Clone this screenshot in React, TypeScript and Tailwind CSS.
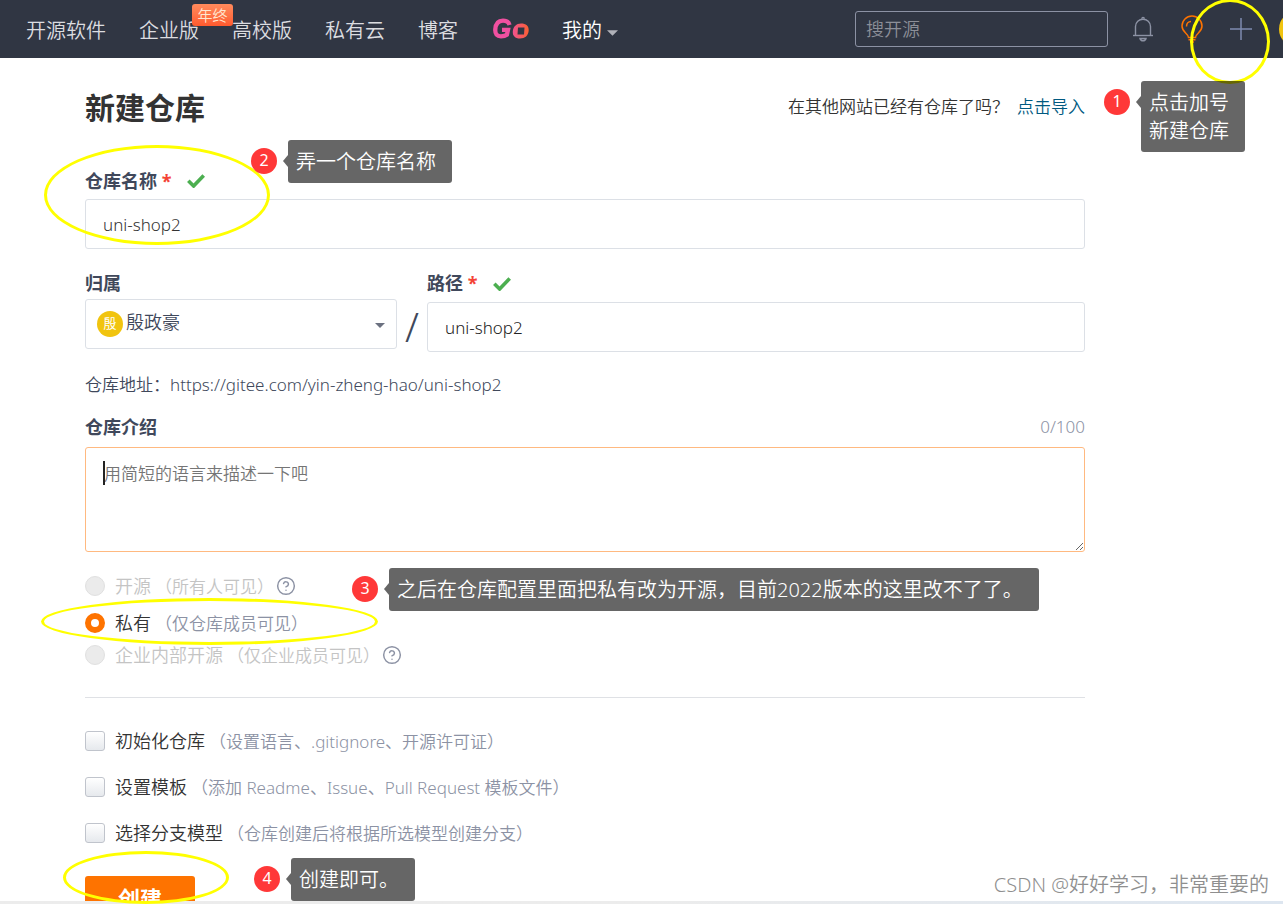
import React from 'react';
import { CircleHelp } from 'lucide-react';

const Caret = ({ className }: { className: string }) => (
  <svg viewBox="0 0 10 5" className={className} fill="currentColor" aria-hidden="true">
    <path d="M0 0h10L5 5z" />
  </svg>
);

const CheckMark = () => (
  <svg viewBox="0 0 18 14" className="ml-4 h-3.5 w-[18px]" fill="none" stroke="#4caf50" strokeWidth="3.6" aria-label="ok">
    <path d="M1.3 6.8L6.6 12L16.7 1.5" />
  </svg>
);

const BellIcon = () => (
  <svg viewBox="0 0 22 26" className="h-[26px] w-[22px]" fill="none" stroke="#8c92a4" strokeWidth="1.4" aria-hidden="true">
    <path d="M3.500 19V10.500C3.500 6 7 3.200 11 3.200S18.500 6 18.500 10.500V19" />
    <path d="M1 19.500h20" />
    <path d="M9.700 2.800a1.300 1.300 0 0 1 2.600 0" />
    <path d="M8 22.500h6c-.4 1.600-1.600 2.300-3 2.300s-2.600-.7-3-2.300z" />
  </svg>
);

const BulbIcon = () => (
  <svg viewBox="0 0 22 28" className="h-7 w-[22px]" fill="none" stroke="#fe7300" strokeWidth="1.5" aria-hidden="true">
    <path d="M7.500 22.500C7.500 18.500 1 17.500 1 11a10 10 0 0 1 20 0C21 17.500 14.500 18.500 14.500 22.500z" />
    <path d="M5.500 11.500C5.500 8.500 7.500 6.500 10 6.500" />
    <path d="M7.500 24.700h7M9 27h4" />
  </svg>
);

const Header = () => {
  return (
    <header className="flex h-[58px] shrink-0 items-center overflow-hidden bg-[#303643] text-[20px] text-[#dcdde0]">
      <nav className="flex shrink-0 items-center gap-[33px] pt-1 pl-[26px] whitespace-nowrap">
        <a href="#">开源软件</a>
        <a href="#" className="relative">
          企业版
          <span className="absolute -top-3 left-[53px] z-10 flex h-[22px] w-[41px] items-center justify-center rounded-[3px] bg-linear-to-b from-[#ff8a5c] to-[#ff5a2e] text-[15px] text-[#ffe6d0]">
            年终
          </span>
        </a>
        <a href="#">高校版</a>
        <a href="#">私有云</a>
        <a href="#">博客</a>
        <a href="#" aria-label="Go" className="pb-1">
          <svg viewBox="0 0 38 22" className="h-[22px] w-[38px]" fill="none" aria-hidden="true">
            <defs>
              <linearGradient id="go" x1="0" y1="0" x2="38" y2="0" gradientUnits="userSpaceOnUse">
                <stop offset="0.5" stopColor="#f050a0" />
                <stop offset="1" stopColor="#fb6030" />
              </linearGradient>
            </defs>
            <path d="M18.500 7C17.800 3.600 15.200 2.700 12 2.700C7 2.700 4.600 6.500 4.300 11.500C4 16 6 18.300 10 18.300C12.500 18.300 14.500 17.800 15.900 16.800L17 11.900H11" stroke="url(#go)" strokeWidth="4.300" />
            <path fillRule="evenodd" fill="url(#go)" d="M30 5.500C35 5.500 38 8 37.700 12.500C37.400 17.500 34 20.500 29 20.500C24 20.500 21.500 17.800 21.800 13.500C22.100 8.500 25.500 5.500 30 5.500zM27 9.500L26.500 16.500H33L33.500 9.500z" />
          </svg>
        </a>
        <a href="#" className="flex items-center gap-[5px] text-white">
          我的
          <Caret className="mt-1 h-1.5 w-[11px] text-[#b0b2b9]" />
        </a>
      </nav>
      <input
        type="search"
        aria-label="搜开源"
        placeholder="搜开源"
        className="ml-auto h-9 w-[253px] shrink-0 rounded-[3px] border border-[#8c92a4] bg-transparent px-2.5 text-[18px] outline-none placeholder:text-[#8c8f98]"
      />
      <div className="ml-6 flex shrink-0 items-center gap-[27px]">
        <button aria-label="通知"><BellIcon /></button>
        <button aria-label="建议"><BulbIcon /></button>
        <button aria-label="新建">
          <svg viewBox="0 0 22 22" className="h-[22px] w-[22px]" stroke="#7d8bb0" strokeWidth="1.5" aria-hidden="true">
            <path d="M11 0v22M0 11h22" />
          </svg>
        </button>
        <span className="-mr-8 h-9 w-9 rounded-full bg-[#f1c40f]" />
      </div>
    </header>
  );
};

type ChoiceProps = { id: string; label: string; hint: string; checked?: boolean; disabled?: boolean; help?: boolean };

const RadioRow = ({ id, label, hint, checked, disabled, help }: ChoiceProps) => (
  <div className={`flex h-8 items-center text-[18px] ${disabled ? 'text-[#c4c4c4]' : 'text-[#333]'}`}>
    <input
      type="radio"
      name="visibility"
      id={id}
      defaultChecked={checked}
      disabled={disabled}
      className="h-5 w-5 shrink-0 appearance-none rounded-full border border-[#e0e0e0] bg-[#ebebeb] checked:border-[6px] checked:border-[#fe7300] checked:bg-white"
    />
    <label htmlFor={id} className="ml-2.5">
      {label}
      <span className={`ml-1 text-[17px] ${disabled ? '' : 'text-[#8c92a4]'}`}>{hint}</span>
    </label>
    {help && <CircleHelp className="ml-0.5 h-5 w-5 text-[#8c92a4]" strokeWidth={1.75} />}
  </div>
);

const CheckRow = ({ id, label, hint }: ChoiceProps) => (
  <div className="flex h-[46px] items-center text-[18px] text-[#333]">
    <input
      type="checkbox"
      id={id}
      className="h-5 w-5 shrink-0 appearance-none rounded-[3px] border border-[#c0c4cc] bg-linear-to-b from-white to-[#e6e9ed]"
    />
    <label htmlFor={id} className="ml-2.5">
      {label}
      <span className="ml-1 text-[17px] text-[#8c92a4]">{hint}</span>
    </label>
  </div>
);

const fieldClass = 'w-full rounded-[3px] border border-[#dce0e6] bg-white outline-none';

const RepoForm = () => {
  return (
    <form className="ml-[85px] max-w-[1000px] text-[18px] text-[#40485b]">
      <div className="mt-6 flex h-[50px] items-center justify-between">
        <h1 className="text-[30px] font-bold text-[#333]">新建仓库</h1>
        <p className="text-[17px] text-[#333]">
          在其他网站已经有仓库了吗？
          <a href="#" className="ml-2 text-[#005980]">点击导入</a>
        </p>
      </div>

      <div className="mt-[33px] flex h-8 items-center">
        <label htmlFor="name" className="font-bold">仓库名称 <span className="text-[#f44336]">*</span></label>
        <CheckMark />
      </div>
      <input id="name" defaultValue="uni-shop2" className={`${fieldClass} mt-0.5 h-[50px] px-[17px] text-[17px] text-[#333]`} />

      <div className="mt-[18px] flex">
        <div className="w-[312px] shrink-0">
          <label htmlFor="owner" className="flex h-8 items-center font-bold">归属</label>
          <div className="relative">
            <select id="owner" className={`${fieldClass} h-[50px] appearance-none pb-1 pl-10 text-[18px]`}>
              <option>殷政豪</option>
            </select>
            <span className="pointer-events-none absolute top-3 left-3 flex h-[26px] w-[26px] items-center justify-center rounded-full bg-[#f1c40f] text-[13px] font-normal text-white">
              殷
            </span>
            <Caret className="pointer-events-none absolute top-6 right-3 h-[5px] w-2.5 text-[#6b7180]" />
          </div>
        </div>
        <div className="flex w-[30px] shrink-0 items-end justify-center text-[40px] leading-[50px]">/</div>
        <div className="flex-1">
          <div className="flex h-[33px] items-center">
            <label htmlFor="path" className="font-bold">路径 <span className="text-[#f44336]">*</span></label>
            <CheckMark />
          </div>
          <input id="path" defaultValue="uni-shop2" className={`${fieldClass} mt-0.5 h-[50px] px-[17px] text-[17px] text-[#222]`} />
        </div>
      </div>

      <p className="mt-[17px] flex h-8 items-center text-[17px]">仓库地址：https://gitee.com/yin-zheng-hao/uni-shop2</p>

      <div className="mt-2.5 flex h-8 items-center justify-between">
        <label htmlFor="intro" className="font-bold">仓库介绍</label>
        <span className="text-[17px] text-[#8c92a4]">0/100</span>
      </div>
      <div className="relative mt-1">
        <textarea
          id="intro"
          placeholder="用简短的语言来描述一下吧"
          className="block h-[105px] w-full resize-y rounded-[3px] border border-[#ffb980] px-[18px] py-3 text-[17px] leading-7 outline-none placeholder:text-[#757575]"
        />
        <span className="absolute top-3.5 left-[18px] h-6 w-0.5 bg-[#222]" />
      </div>

      <div className="mt-[18px]">
        <RadioRow id="open" label="开源" hint="（所有人可见）" disabled help />
        <div className="mt-[5px]">
          <RadioRow id="private" label="私有" hint="（仅仓库成员可见）" checked />
        </div>
        <RadioRow id="inner" label="企业内部开源" hint="（仅企业成员可见）" disabled help />
      </div>

      <hr className="mt-[26px] border-[#dfe1e5]" />

      <div className="mt-5">
        <CheckRow id="init" label="初始化仓库" hint="（设置语言、.gitignore、开源许可证）" />
        <CheckRow id="template" label="设置模板" hint="（添加 Readme、Issue、Pull Request 模板文件）" />
        <CheckRow id="branch" label="选择分支模型" hint="（仓库创建后将根据所选模型创建分支）" />
      </div>

      <button type="button" className="mt-5 h-[45px] w-[110px] rounded-[3px] bg-[#fe7300] text-[22px] font-bold text-white">
        创建
      </button>
    </form>
  );
};

type NoteProps = { step: number; place: string; children: React.ReactNode };

// numbered marker with its speech bubble
const Note = ({ step, place, children }: NoteProps) => (
  <div className={`absolute flex items-start ${place}`}>
    <span className="mt-2 flex h-[26px] w-[26px] items-center justify-center rounded-full bg-[#ff3838] pb-0.5 text-[16px] font-normal text-white">
      {step}
    </span>
    <svg viewBox="0 0 5 12" className="mt-[15px] ml-[6px] h-3 w-[5px]" aria-hidden="true">
      <path d="M5 0v12L0 6z" fill="#666" />
    </svg>
    <p className="rounded-[3px] bg-black/60 pt-2 pr-4 pb-[7px] pl-2 text-[20px] leading-7 whitespace-nowrap text-white">{children}</p>
  </div>
);

const Ring = ({ place }: { place: string }) => (
  <span className={`absolute rounded-[50%] border-[3px] border-[#ffff00] ${place}`} />
);

const Annotations = () => (
  <div className="pointer-events-none absolute inset-0 z-20 overflow-hidden">
    <Ring place="-top-px left-[1190px] h-[85px] w-20" />
    <Ring place="top-[145px] left-[44px] h-[100px] w-[226px]" />
    <Ring place="top-[598px] left-[41px] h-[47px] w-[337px]" />
    <Ring place="top-[851px] left-[63px] h-[53px] w-[166px]" />
    <Note step={1} place="top-[81px] left-[1104px]">点击加号<br />新建仓库</Note>
    <Note step={2} place="top-[140px] left-[251px]">弄一个仓库名称</Note>
    <Note step={3} place="top-[568px] left-[352px]">之后在仓库配置里面把私有改为开源，目前2022版本的这里改不了了。</Note>
    <Note step={4} place="top-[858px] left-[254px]">创建即可。</Note>
    <p className="absolute right-[14px] bottom-1 text-[20px] text-[#8f8f8f]">CSDN @好好学习，非常重要的</p>
  </div>
);

const App = () => {
  return (
    <div
      lang="zh-CN"
      className="relative flex h-screen flex-col overflow-hidden bg-white font-['Noto_Sans','Noto_Sans_CJK_SC',sans-serif] font-[350]"
    >
      <Header />
      <main className="min-h-0 flex-1 overflow-hidden">
        <RepoForm />
      </main>
      <div className="h-[3px] shrink-0 bg-linear-to-r from-[#ececec] via-[#ececec] to-[#dde6f0]" />
      <Annotations />
    </div>
  );
};

export default App;
